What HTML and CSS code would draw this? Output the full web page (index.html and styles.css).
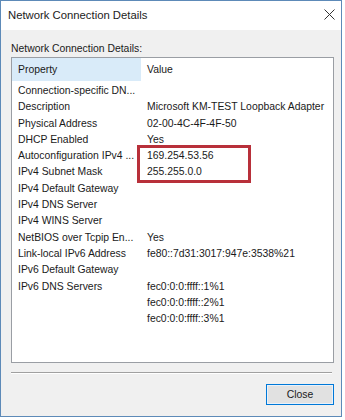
FILE: index.html
```html
<!DOCTYPE html>
<html>
<head>
<meta charset="utf-8">
<link rel="stylesheet" href="styles.css">
</head>
<body>
<div class="window">
  <div class="titlebar">
    <span class="title">Network Connection Details</span>
    <svg class="close-x" width="11" height="11" viewBox="0 0 11 11"><path d="M0.5 0.5 L10.5 10.5 M10.5 0.5 L0.5 10.5" stroke="#333" stroke-width="1" fill="none"/></svg>
  </div>
  <div class="content">
    <div class="label">Network Connection Details:</div>
    <div class="listbox">
      <div class="header">
        <div class="hcell hprop">Property</div>
        <div class="hcell hval">Value</div>
      </div>
      <div class="rows">
        <div class="p">Connection-specific DN...</div><div class="v"></div>
        <div class="p">Description</div><div class="v">Microsoft KM-TEST Loopback Adapter</div>
        <div class="p">Physical Address</div><div class="v">02-00-4C-4F-4F-50</div>
        <div class="p">DHCP Enabled</div><div class="v">Yes</div>
        <div class="p">Autoconfiguration IPv4 ...</div><div class="v">169.254.53.56</div>
        <div class="p">IPv4 Subnet Mask</div><div class="v">255.255.0.0</div>
        <div class="p">IPv4 Default Gateway</div><div class="v"></div>
        <div class="p">IPv4 DNS Server</div><div class="v"></div>
        <div class="p">IPv4 WINS Server</div><div class="v"></div>
        <div class="p">NetBIOS over Tcpip En...</div><div class="v">Yes</div>
        <div class="p">Link-local IPv6 Address</div><div class="v">fe80::7d31:3017:947e:3538%21</div>
        <div class="p">IPv6 Default Gateway</div><div class="v"></div>
        <div class="p">IPv6 DNS Servers</div><div class="v">fec0:0:0:ffff::1%1</div>
        <div class="p"></div><div class="v">fec0:0:0:ffff::2%1</div>
        <div class="p"></div><div class="v">fec0:0:0:ffff::3%1</div>
      </div>
      <div class="highlight"></div>
    </div>
    <div class="separator"></div>
    <div class="footer">
      <button class="btn">Close</button>
    </div>
  </div>
</div>
</body>
</html>
```
FILE: styles.css
```css
html, body {
  margin: 0;
  padding: 0;
  background: #ffffff;
}
body {
  width: 345px;
  height: 420px;
  overflow: hidden;
  font-family: "Liberation Sans", Arial, sans-serif;
  font-size: 10.4px;
  color: #1a1a1a;
}
.window {
  width: 342px;
  height: 417px;
  box-sizing: border-box;
  border: 1px solid #5d8ab8;
  background: #f0f0f0;
  display: flex;
  flex-direction: column;
}
.titlebar {
  height: 29px;
  flex: none;
  background: #ffffff;
  display: flex;
  align-items: center;
  justify-content: space-between;
  padding: 0 6px 0 7px;
}
.title {
  font-size: 11.3px;
  color: #222;
  padding-bottom: 1px;
}
.close-x {
  margin-top: -2px;
}
.content {
  flex: 1;
  display: flex;
  flex-direction: column;
  padding: 0 7px 0 10px;
}
.label {
  height: 27px;
  line-height: 14px;
  padding-top: 12px;
  box-sizing: border-box;
  color: #1a1a1a;
}
.listbox {
  position: relative;
  height: 306px;
  width: 323px;
  box-sizing: border-box;
  border: 1px solid #9a9ea4;
  background: #ffffff;
}
.header {
  display: grid;
  grid-template-columns: 129px 1fr;
  height: 23px;
}
.hcell {
  line-height: 23px;
  padding-left: 6px;
}
.hprop {
  background: #d9ebf9;
}
.hval {
  background: #ffffff;
}
.rows {
  display: grid;
  grid-template-columns: 129px 1fr;
  grid-auto-rows: 16.3px;
  padding-top: 2px;
}
.p, .v {
  line-height: 16.3px;
  white-space: nowrap;
  overflow: hidden;
  padding-left: 6px;
}
.highlight {
  position: absolute;
  left: 125px;
  top: 87px;
  width: 114px;
  height: 38px;
  box-sizing: border-box;
  border: 3px solid #b8303a;
}
.separator {
  margin-top: 9px;
  width: 321px;
  height: 1px;
  background: #a0a0a0;
  border-bottom: 1px solid #ffffff;
}
.footer {
  display: flex;
  justify-content: flex-end;
  padding-top: 10px;
}
.btn {
  width: 68px;
  height: 21px;
  box-sizing: border-box;
  border: 1px solid #0078d7;
  background: #e1e1e1;
  font-family: "Liberation Sans", Arial, sans-serif;
  font-size: 10.4px;
  color: #1a1a1a;
  padding: 0;
  margin: 0;
  box-shadow: inset 0 0 0 1px #e8f1fb;
}
```
